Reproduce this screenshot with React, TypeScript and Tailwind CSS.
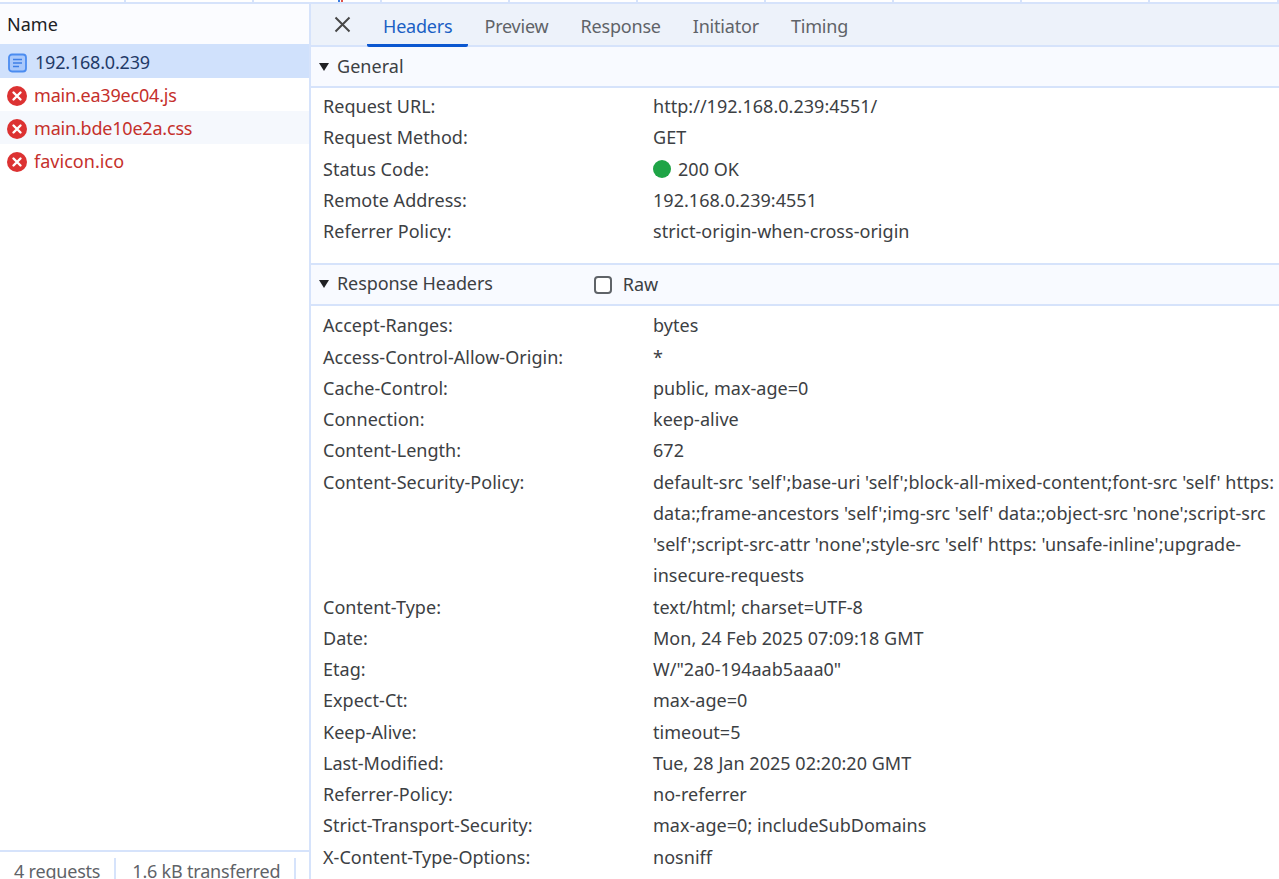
const general: [string, React.ReactNode][] = [
  ["Request URL:", "http://192.168.0.239:4551/"],
  ["Request Method:", "GET"],
  [
    "Status Code:",
    <span className="flex items-center">
      <span className="mr-[7px] h-[18px] w-[18px] rounded-full bg-[#1ea446]"></span>200 OK
    </span>,
  ],
  ["Remote Address:", "192.168.0.239:4551"],
  ["Referrer Policy:", "strict-origin-when-cross-origin"],
];

const response: [string, React.ReactNode][] = [
  ["Accept-Ranges:", "bytes"],
  ["Access-Control-Allow-Origin:", "*"],
  ["Cache-Control:", "public, max-age=0"],
  ["Connection:", "keep-alive"],
  ["Content-Length:", "672"],
  [
    "Content-Security-Policy:",
    "default-src 'self';base-uri 'self';block-all-mixed-content;font-src 'self' https: data:;frame-ancestors 'self';img-src 'self' data:;object-src 'none';script-src 'self';script-src-attr 'none';style-src 'self' https: 'unsafe-inline';upgrade-insecure-requests",
  ],
  ["Content-Type:", "text/html; charset=UTF-8"],
  ["Date:", "Mon, 24 Feb 2025 07:09:18 GMT"],
  ["Etag:", 'W/"2a0-194aab5aaa0"'],
  ["Expect-Ct:", "max-age=0"],
  ["Keep-Alive:", "timeout=5"],
  ["Last-Modified:", "Tue, 28 Jan 2025 02:20:20 GMT"],
  ["Referrer-Policy:", "no-referrer"],
  ["Strict-Transport-Security:", "max-age=0; includeSubDomains"],
  ["X-Content-Type-Options:", "nosniff"],
];

function ErrorIcon() {
  return (
    <svg width="20" height="20" viewBox="0 0 20 20" className="shrink-0">
      <circle cx="10" cy="10" r="10" fill="#dc3232" />
      <path d="M6.5 6.5l7 7M13.5 6.5l-7 7" stroke="#fff" strokeWidth="2.4" strokeLinecap="round" />
    </svg>
  );
}

function DocIcon() {
  return (
    <svg width="20" height="20" viewBox="0 0 20 20" className="shrink-0">
      <rect x="1" y="1.5" width="17" height="17" rx="3" fill="#a9c8fb" stroke="#4b8cf0" strokeWidth="1.8" />
      <path d="M5 6.5h9M5 10h9M5 13.5h6" stroke="#3f7fe6" strokeWidth="1.6" />
    </svg>
  );
}

function Rows({ rows }: { rows: [string, React.ReactNode][] }) {
  return (
    <div>
      {rows.map(([k, v]) => (
        <div key={k} className="flex leading-[31.25px] text-[#3c4043]">
          <div className="w-[342px] shrink-0 pl-[12px]">{k}</div>
          <div className="min-w-0 flex-1 break-words">{v}</div>
        </div>
      ))}
    </div>
  );
}

const ticks = [126, 128, 128, 128, 128, 128, 128, 128, 128, 129];

export default function App() {
  return (
    <div className="flex h-[879px] w-[1279px] flex-col overflow-hidden bg-white font-['Noto_Sans','Noto_Sans_CJK_KR',sans-serif] text-[18px] tracking-[0.03px]">
      {/* timeline strip */}
      <div className="flex h-[4px] shrink-0 border-b-2 border-[#d6e3fb] bg-white">
        {ticks.map((w, i) => (
          <div
            key={i}
            style={{ width: w }}
            className="relative shrink-0 border-r-2 border-[#d6e3fb]"
          >
            {i === 2 && (
              <span className="absolute left-[84px] top-0 flex h-[2px]">
                <span className="w-[2px] bg-[#3b7de0]"></span>
                <span className="ml-px w-[2px] bg-[#e0524a]"></span>
              </span>
            )}
          </div>
        ))}
      </div>

      <div className="flex min-h-0 flex-1">
        {/* Request list */}
        <div className="flex w-[311px] shrink-0 flex-col border-r-2 border-[#d6e3fb]">
          <div className="flex h-[40px] shrink-0 items-center bg-[#fbfcff] pl-[7px] text-[#202124]">Name</div>
          <div className="flex h-[34px] items-center gap-[7px] bg-[#d0e1fc] pl-[8px] pt-[3px] tracking-[-0.2px] text-[#1f3a68]">
            <DocIcon />
            192.168.0.239
          </div>
          <div className="flex h-[33px] items-center gap-[7px] pl-[7px] pt-[2px] tracking-[-0.2px] text-[#c5302b]">
            <ErrorIcon />
            main.ea39ec04.js
          </div>
          <div className="flex h-[33px] items-center gap-[7px] bg-[#f5f8fd] pl-[7px] pt-[2px] tracking-[-0.2px] text-[#c5302b]">
            <ErrorIcon />
            main.bde10e2a.css
          </div>
          <div className="flex h-[33px] items-center gap-[7px] pl-[7px] pt-[2px] text-[#c5302b]">
            <ErrorIcon />
            favicon.ico
          </div>
          <div className="flex-1"></div>
          <div className="flex h-[29px] shrink-0 items-start overflow-hidden border-t-2 border-[#d6e3fb] pt-[6px] leading-[26px] tracking-[-0.2px] text-[#5f6368]">
            <span className="border-r-2 border-[#d6e3fb] pl-[14px] pr-[14px]">4 requests</span>
            <span className="border-r-2 border-[#d6e3fb] pl-[16px] pr-[14px]">1.6 kB transferred</span>
          </div>
        </div>

        {/* Details */}
        <div className="flex min-w-0 flex-1 flex-col">
          <div className="flex h-[43px] shrink-0 items-stretch border-b-2 border-[#d6e3fb] bg-[#edf2fa] tracking-[-0.2px] text-[#5f6368]">
            <div className="flex w-[56px] items-start justify-center pl-[6px] pt-[12px]">
              <svg width="17" height="17" viewBox="0 0 17 17">
                <path d="M1.5 1.5l14 14M15.5 1.5l-14 14" stroke="#474747" strokeWidth="2" />
              </svg>
            </div>
            <div className="-mb-[2px] rounded-b-[2px] border-b-[3px] border-[#0b57d0] px-[16px] pt-[9px] text-[#1a5fc4]">Headers</div>
            <div className="px-[16px] pt-[9px]">Preview</div>
            <div className="px-[16px] pt-[9px]">Response</div>
            <div className="px-[16px] pt-[9px]">Initiator</div>
            <div className="px-[16px] pt-[9px]">Timing</div>
          </div>

          <div className="flex h-[41px] shrink-0 items-center border-b-2 border-[#d6e3fb] bg-[#f8faff] pl-[8px] text-[#3c4043]">
            <span className="mr-[8px] h-0 w-0 border-x-[5px] border-t-[8px] border-x-transparent border-t-[#202124]"></span>
            General
          </div>
          <div className="pt-[3px]">
            <Rows rows={general} />
          </div>
          <div className="mt-[16px] flex h-[43px] shrink-0 items-center border-y-2 border-[#d6e3fb] bg-[#f8faff] pb-[2px] pl-[8px] tracking-[-0.1px] text-[#3c4043]">
            <span className="mr-[8px] h-0 w-0 border-x-[5px] border-t-[8px] border-x-transparent border-t-[#202124]"></span>
            Response Headers
            <span className="ml-[101px] mr-[11px] mt-[2px] h-[18px] w-[18px] rounded-[4px] border-2 border-[#5f6368] bg-white"></span>
            <span className="mt-[2px]">Raw</span>
          </div>
          <div className="pt-[4px]">
            <Rows rows={response} />
          </div>
        </div>
      </div>
    </div>
  );
}
